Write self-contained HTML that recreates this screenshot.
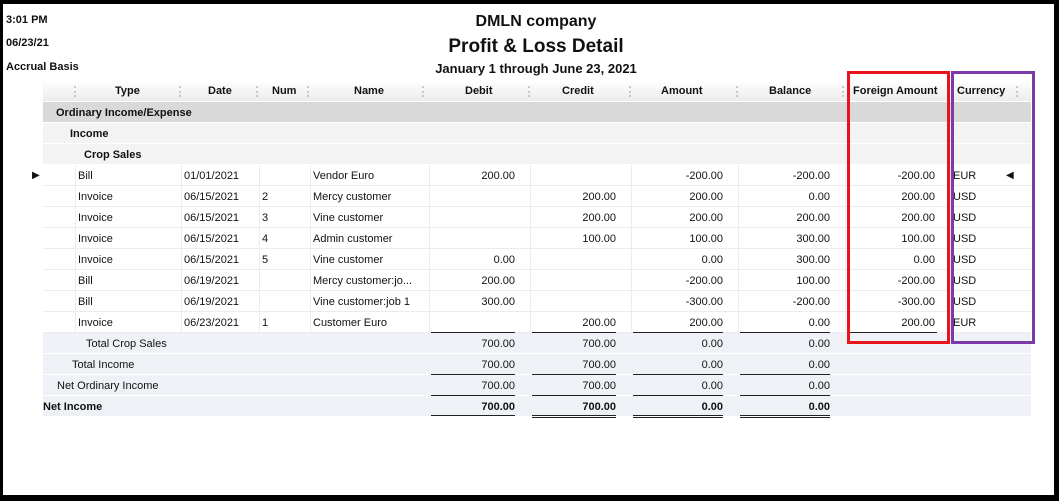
<!DOCTYPE html>
<html><head><style>
*{margin:0;padding:0;box-sizing:border-box}
body{width:1059px;height:501px;background:#000;position:relative;overflow:hidden;font-family:"Liberation Sans",Arial,sans-serif;font-size:11px;color:#111}
#pg{position:absolute;left:3px;top:4px;width:1051px;height:491px;background:#fff}
.a{position:absolute;white-space:nowrap}
.b{font-weight:bold}
.row{position:absolute;left:43px;width:988px;height:20px}
.c{position:absolute;top:0;height:20px;line-height:22px;white-space:nowrap}
.r{text-align:right}
.ul{position:absolute;height:1px;background:#222}
.dot{position:absolute;top:86px;width:2px;height:11px;border-left:2px dotted #c8c8c8}
</style></head><body><div id="pg"></div>
<div class="a b" style="left:6px;top:14px;font-size:11px">3:01 PM</div>
<div class="a b" style="left:6px;top:37px;font-size:11px">06/23/21</div>
<div class="a b" style="left:6px;top:61px;font-size:11px">Accrual Basis</div>
<div class="a b" style="left:0;width:1072px;text-align:center;top:13px;font-size:16px">DMLN company</div>
<div class="a b" style="left:0;width:1072px;text-align:center;top:36px;font-size:19px">Profit &amp; Loss Detail</div>
<div class="a b" style="left:0;width:1072px;text-align:center;top:61px;font-size:13px">January 1 through June 23, 2021</div>

<div class="row" style="top:80px;height:21px;background:linear-gradient(#fff,#ececec)"></div>
<div class="dot" style="left:74px"></div><div class="dot" style="left:179px"></div><div class="dot" style="left:256px"></div><div class="dot" style="left:307px"></div><div class="dot" style="left:422px"></div><div class="dot" style="left:528px"></div><div class="dot" style="left:629px"></div><div class="dot" style="left:736px"></div><div class="dot" style="left:842px"></div><div class="dot" style="left:1016px"></div>
<div class="a b" style="top:85px;left:115px">Type</div>
<div class="a b" style="top:85px;left:208px">Date</div>
<div class="a b" style="top:85px;left:272px">Num</div>
<div class="a b" style="top:85px;left:354px">Name</div>
<div class="a b" style="top:85px;left:465px">Debit</div>
<div class="a b" style="top:85px;left:562px">Credit</div>
<div class="a b" style="top:85px;left:661px">Amount</div>
<div class="a b" style="top:85px;left:769px">Balance</div>
<div class="a b" style="top:85px;left:853px">Foreign Amount</div>
<div class="a b" style="top:85px;left:957px">Currency</div>

<div class="row" style="top:102px;background:#d9d9d9"></div><div class="a b" style="left:56px;top:107px">Ordinary Income/Expense</div>
<div class="row" style="top:123px;background:#f3f3f3"></div><div class="a b" style="left:70px;top:128px">Income</div>
<div class="row" style="top:144px;background:#f3f3f3"></div><div class="a b" style="left:84px;top:149px">Crop Sales</div>
<div class="a" style="left:32px;top:170px;font-size:10px">&#9654;</div>
<div class="a" style="left:1006px;top:170px;font-size:10px">&#9664;</div>

<div class="row" style="top:333px;background:#eef2f6"></div><div class="a" style="left:86px;top:338px">Total Crop Sales</div>
<div class="row" style="top:354px;background:#eef2f6"></div><div class="a" style="left:72px;top:359px">Total Income</div>
<div class="row" style="top:375px;background:#eef2f6"></div><div class="a" style="left:57px;top:380px">Net Ordinary Income</div>
<div class="row" style="top:396px;background:#eef2f6"></div><div class="a b" style="left:43px;top:401px">Net Income</div>
<div id="rows"></div>

<div class="a" style="left:847px;top:71px;width:103px;height:273px;border:3px solid #e8141c"></div>
<div class="a" style="left:951px;top:71px;width:84px;height:273px;border:3px solid #7a3aa8"></div>

<script>
var cols=[75,181,259,310,429,530,631,738,845,950,1031];
var data=[["Bill","01/01/2021","","Vendor Euro","200.00","","-200.00","-200.00","-200.00","EUR"],
["Invoice","06/15/2021","2","Mercy customer","","200.00","200.00","0.00","200.00","USD"],
["Invoice","06/15/2021","3","Vine customer","","200.00","200.00","200.00","200.00","USD"],
["Invoice","06/15/2021","4","Admin customer","","100.00","100.00","300.00","100.00","USD"],
["Invoice","06/15/2021","5","Vine customer","0.00","","0.00","300.00","0.00","USD"],
["Bill","06/19/2021","","Mercy customer:jo...","200.00","","-200.00","100.00","-200.00","USD"],
["Bill","06/19/2021","","Vine customer:job 1","300.00","","-300.00","-200.00","-300.00","USD"],
["Invoice","06/23/2021","1","Customer Euro","","200.00","200.00","0.00","200.00","EUR"]];
var h="";
data.forEach(function(d,i){var y=165+i*21;
h+='<div class="a" style="left:43px;top:'+(y+20)+'px;width:988px;height:1px;background:#ececec"></div>';
for(var k=0;k<10;k++){var l=cols[k],w=cols[k+1]-cols[k];
h+='<div class="a" style="left:'+l+'px;top:'+y+'px;width:1px;height:21px;background:#ececec"></div>';
if(k<4||k==9)h+='<div class="c" style="left:'+(l+3)+'px;top:'+y+'px">'+d[k]+'</div>';
else h+='<div class="c r" style="left:'+l+'px;top:'+y+'px;width:'+(w-15)+'px">'+d[k]+'</div>';}});
var tv=["700.00","700.00","0.00","0.00"];
[333,354,375,396].forEach(function(y,j){for(var k=4;k<8;k++){var l=cols[k],w=cols[k+1]-cols[k];
h+='<div class="c r'+(j==3?' b':'')+'" style="left:'+l+'px;top:'+y+'px;width:'+(w-15)+'px">'+tv[k-4]+'</div>';
if(j!=1)h+='<div class="ul" style="left:'+(l+2)+'px;width:'+(w-17)+'px;top:'+(y-1)+'px"></div>';
if(j==3){h+='<div class="ul" style="left:'+(l+2)+'px;width:'+(w-17)+'px;top:'+(y+19)+'px"></div>';if(k>4)h+='<div class="ul" style="left:'+(l+2)+'px;width:'+(w-17)+'px;top:'+(y+21)+'px"></div>';}}});
h+='<div class="ul" style="left:849px;width:88px;top:332px"></div>';
document.getElementById("rows").innerHTML=h;
</script>
</body></html>
